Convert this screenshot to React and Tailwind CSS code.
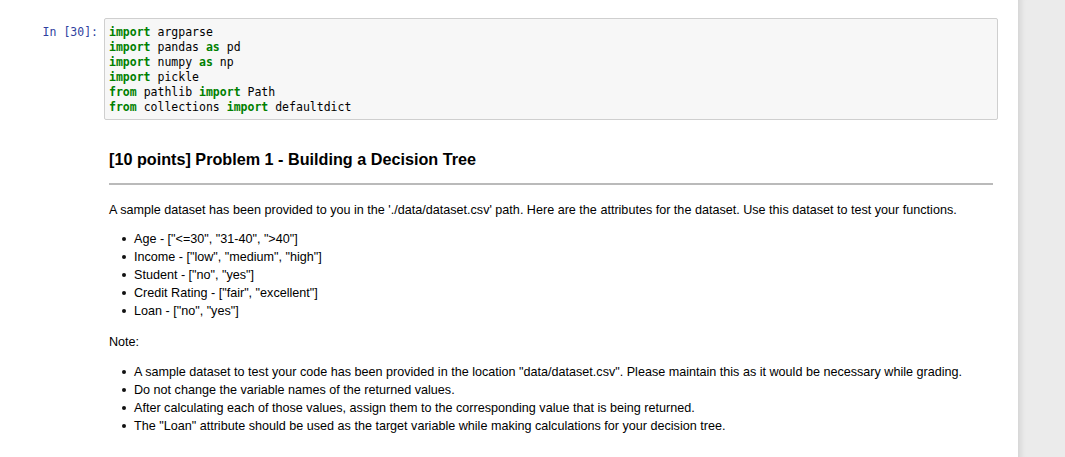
import React from 'react';

const mono = { fontFamily: '"DejaVu Sans Mono", "Liberation Mono", monospace' };
const sans = { fontFamily: '"Liberation Sans", Arial, sans-serif' };

const codeLines = [
  [['k', 'import'], ['t', ' argparse']],
  [['k', 'import'], ['t', ' pandas '], ['k', 'as'], ['t', ' pd']],
  [['k', 'import'], ['t', ' numpy '], ['k', 'as'], ['t', ' np']],
  [['k', 'import'], ['t', ' pickle']],
  [['k', 'from'], ['t', ' pathlib '], ['k', 'import'], ['t', ' Path']],
  [['k', 'from'], ['t', ' collections '], ['k', 'import'], ['t', ' defaultdict']],
];

const attributes = [
  'Age - ["<=30", "31-40", ">40"]',
  'Income - ["low", "medium", "high"]',
  'Student - ["no", "yes"]',
  'Credit Rating - ["fair", "excellent"]',
  'Loan - ["no", "yes"]',
];

const notes = [
  'A sample dataset to test your code has been provided in the location "data/dataset.csv". Please maintain this as it would be necessary while grading.',
  'Do not change the variable names of the returned values.',
  'After calculating each of those values, assign them to the corresponding value that is being returned.',
  'The "Loan" attribute should be used as the target variable while making calculations for your decision tree.',
];

const BulletList = ({ items }) => (
  <ul className="pl-[25px]">
    {items.map((item, i) => (
      <li key={i} className="flex items-center h-[18px] whitespace-nowrap">
        <span className="w-[4px] h-[4px] rounded-full bg-[#111] mr-[8px] -ml-[12px] shrink-0" />
        <span>{item}</span>
      </li>
    ))}
  </ul>
);

export default function App() {
  return (
    <div className="flex w-[1065px] h-[457px] overflow-hidden bg-white">
      <main className="w-[1018px] pt-[18px] pr-[20px]">
        {/* code cell */}
        <div className="flex">
          <div
            className="w-[104px] shrink-0 pr-[6px] pt-[7px] text-right text-[11.5px] leading-[15px] text-[#303f9f]"
            style={mono}
          >
            In&nbsp;[30]:
          </div>
          <div
            className="flex-1 bg-[#f7f7f7] border border-[#cfcfcf] rounded-[2px] pl-[4px] pt-[6px] pb-[4px] text-[11.5px] leading-[15px] text-[#000]"
            style={mono}
          >
            {codeLines.map((line, i) => (
              <div key={i} className="whitespace-pre">
                {line.map(([kind, txt], j) =>
                  kind === 'k' ? (
                    <span key={j} className="text-[#008000] font-bold">{txt}</span>
                  ) : (
                    <span key={j}>{txt}</span>
                  )
                )}
              </div>
            ))}
          </div>
        </div>

        {/* markdown cell */}
        <div className="pl-[109px] pr-[5px] text-[12.6px] text-[#000]" style={sans}>
          <h2 className="mt-[29px] text-[16.2px] leading-[20px] font-bold">
            [10 points] Problem 1 - Building a Decision Tree
          </h2>
          <hr className="mt-[14px] border-0 h-[2px] bg-[#bababa]" />
          <p className="mt-[16px] leading-[18px] whitespace-nowrap">
            A sample dataset has been provided to you in the './data/dataset.csv' path. Here are the attributes for the dataset. Use this dataset to test your functions.
          </p>
          <div className="mt-[11px]">
            <BulletList items={attributes} />
          </div>
          <p className="mt-[13px] leading-[18px]">Note:</p>
          <div className="mt-[12px]">
            <BulletList items={notes} />
          </div>
        </div>
      </main>
      <aside className="flex-1 bg-[#ebebeb] shadow-[inset_8px_0_6px_-6px_rgba(0,0,0,0.12)]" />
    </div>
  );
}
